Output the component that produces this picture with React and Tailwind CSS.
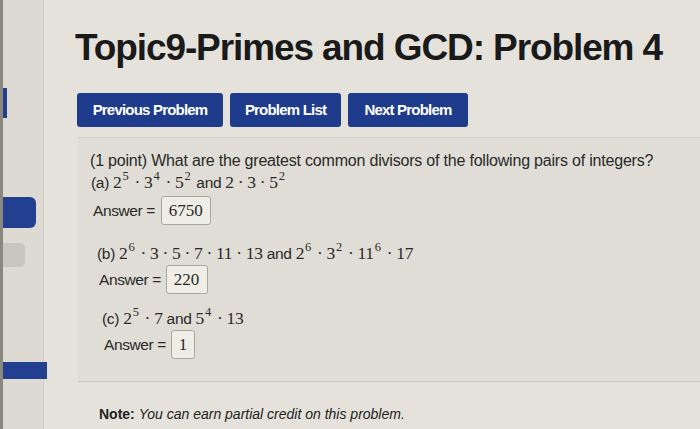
import React from "react";

function M({ children }) {
  return <span className="font-['Liberation_Serif',serif] text-[17.5px]">{children}</span>;
}
function Sup({ children }) {
  return <sup className="text-[12.5px] relative -top-[8px] ml-[1px] mr-[2px]">{children}</sup>;
}
const Dot = () => <span className="mx-[4px]">·</span>;

function Answer({ value, w, indent, gap }) {
  return (
    <div className={`flex items-center ${indent}`}>
      <span className="text-[15.5px] text-[#2a2a2a] tracking-[-0.4px]">Answer =</span>
      <span
        className={`${gap} ${w} h-[29px] flex items-center px-[7px] border border-[#a9a79f] rounded-[3px] bg-[#eeede6] font-['Liberation_Serif',serif] text-[17px] text-[#2a2a2a]`}
      >
        {value}
      </span>
    </div>
  );
}

export default function App() {
  return (
    <div className="w-[700px] h-[429px] overflow-hidden flex bg-[#e4e2da] text-[#1e1e1e] font-['Liberation_Sans',Arial,sans-serif]">
      {/* Sidebar */}
      <div className="w-[44px] shrink-0 border-l-[3px] border-[#8a877f] border-r border-r-[#cfccc3] bg-[#dcdad2] flex flex-col">
        <div className="mt-[88px] w-[4px] h-[30px] bg-[#233f8f]" />
        <div className="mt-[79px] w-[33px] h-[31px] bg-[#233f8f] rounded-r-[6px]" />
        <div className="mt-[15px] w-[22px] h-[24px] bg-[#c8c6bf] rounded-r-[5px]" />
        <div className="mt-[95px] w-[44px] h-[17px] bg-[#233f8f]" />
      </div>

      {/* Main */}
      <div className="flex-1 flex flex-col pl-[31px]">
        <h1 className="mt-[26px] text-[37px] leading-[44px] font-bold tracking-[-1.1px] text-[#1a1a1a]">
          Topic9-Primes and GCD: Problem 4
        </h1>
        <div className="mt-[23px] flex gap-[7px] ml-[2px]">
          {[
            ["Previous Problem", "w-[146px]"],
            ["Problem List", "w-[111px]"],
            ["Next Problem", "w-[120px]"],
          ].map(([t, w]) => (
            <div
              key={t}
              className={`${w} h-[34px] bg-[#1f3c8c] rounded-[3px] flex items-center justify-center text-white text-[15px] font-bold tracking-[-0.8px]`}
            >
              {t}
            </div>
          ))}
        </div>

        <div className="mt-[10px] ml-[3px] h-[245px] bg-[#dfddd5] border-t border-[#d2d0c8] border-b border-b-[#c9c7bf] pl-[12px] pt-[12px]">
          <div className="text-[16px] leading-[21px] tracking-[-0.2px] text-[#2a2a2a]">
            (1 point) What are the greatest common divisors of the following pairs of integers?
          </div>
          <div className="text-[15.5px] leading-[22px] tracking-[-0.3px] text-[#2a2a2a] ml-[1px]">
            (a) <M>2<Sup>5</Sup><Dot />3<Sup>4</Sup><Dot />5<Sup>2</Sup></M> and{" "}
            <M>2<Dot />3<Dot />5<Sup>2</Sup></M>
          </div>
          <div className="mt-[2px]">
            <Answer value="6750" w="w-[50px]" indent="ml-[3px]" gap="ml-[6px]" />
          </div>

          <div className="mt-[17px] text-[15.5px] leading-[22px] tracking-[-0.3px] text-[#2a2a2a] ml-[7px]">
            (b) <M>2<Sup>6</Sup><Dot />3<Dot />5<Dot />7<Dot />11<Dot />13</M> and{" "}
            <M>2<Sup>6</Sup><Dot />3<Sup>2</Sup><Dot />11<Sup>6</Sup><Dot />17</M>
          </div>
          <div className="mt-[0px]">
            <Answer value="220" w="w-[42px]" indent="ml-[9px]" gap="ml-[5px]" />
          </div>

          <div className="mt-[13px] text-[15.5px] leading-[22px] tracking-[-0.3px] text-[#2a2a2a] ml-[12px]">
            (c) <M>2<Sup>5</Sup><Dot />7</M> and <M>5<Sup>4</Sup><Dot />13</M>
          </div>
          <div className="mt-[0px]">
            <Answer value="1" w="w-[24px]" indent="ml-[14px]" gap="ml-[5px]" />
          </div>
        </div>

        <div className="mt-[22px] ml-[24px] text-[14px] text-[#222]">
          <b>Note:</b> <i>You can earn partial credit on this problem.</i>
        </div>
      </div>
    </div>
  );
}
